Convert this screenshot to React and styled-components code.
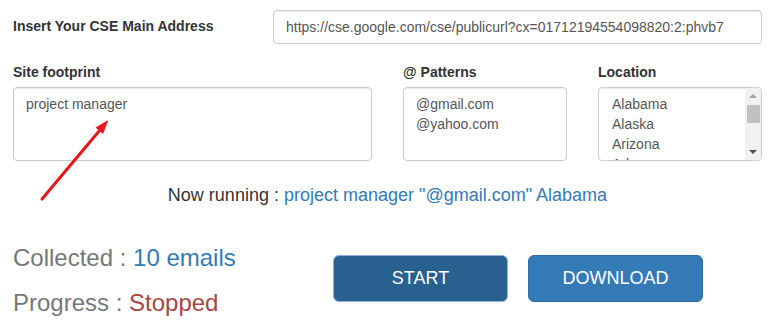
import React from "react";
import styled, { createGlobalStyle } from "styled-components";

const GlobalStyle = createGlobalStyle`
  * { box-sizing: border-box; }
  html, body { margin: 0; padding: 0; background: #fff; }
  body {
    font-family: "Liberation Sans", Arial, Helvetica, sans-serif;
    color: #333;
    font-size: 14px;
    line-height: 20px;
  }
`;

const Page = styled.div`
  position: relative;
  width: 770px;
  height: 324px;
  overflow: hidden;
  padding: 10px 8px 0 13px;
`;

const TopRow = styled.div`
  display: flex;
  align-items: center;
  height: 34px;
`;

const TopLabel = styled.label`
  flex: 0 0 260px;
  font-weight: bold;
  font-size: 14px;
  margin-top: -2px;
`;

const UrlInput = styled.input`
  flex: 1;
  height: 34px;
  border: 1px solid #ccc;
  border-radius: 4px;
  padding: 6px 4px 6px 12px;
  font-family: inherit;
  font-size: 14px;
  color: #555;
  box-shadow: inset 0 1px 1px rgba(0, 0, 0, 0.075);
  outline: none;
`;

const FieldsGrid = styled.div`
  margin-top: 18px;
  display: grid;
  grid-template-columns: 359px 164px 164px;
  column-gap: 31px;
`;

const Field = styled.div`
  display: flex;
  flex-direction: column;
`;

const FieldLabel = styled.label`
  font-weight: bold;
  font-size: 14px;
  line-height: 20px;
  margin-bottom: 5px;
`;

const TextArea = styled.textarea`
  height: 74px;
  border: 1px solid #ccc;
  border-radius: 4px;
  padding: 6px 12px;
  font-family: inherit;
  font-size: 14px;
  line-height: 20px;
  color: #555;
  resize: none;
  overflow: hidden;
  box-shadow: inset 0 1px 1px rgba(0, 0, 0, 0.075);
  outline: none;
`;

const ListBox = styled.div`
  height: 74px;
  border: 1px solid #ccc;
  border-radius: 4px;
  display: flex;
  overflow: hidden;
  box-shadow: inset 0 1px 1px rgba(0, 0, 0, 0.075);
`;

const OptionList = styled.ul`
  flex: 1;
  list-style: none;
  margin: 0;
  padding: 6px 0 0 13px;
  font-size: 14px;
  line-height: 20px;
  color: #555;
`;

const Scrollbar = styled.div`
  flex: 0 0 16px;
  background: #f1f1f1;
  display: flex;
  flex-direction: column;
  align-items: center;
`;

const ArrowButton = styled.div`
  height: 16px;
  width: 16px;
  display: flex;
  align-items: center;
  justify-content: center;
  &::after {
    content: "";
    width: 0;
    height: 0;
    border-left: 4px solid transparent;
    border-right: 4px solid transparent;
    ${(p) =>
      p.$dir === "up"
        ? `border-bottom: 4px solid ${p.$color};`
        : `border-top: 4px solid ${p.$color};`}
  }
`;

const Thumb = styled.div`
  width: 13px;
  height: 18px;
  margin-top: 1px;
  background: #c1c1c1;
`;

const Track = styled.div`
  flex: 1;
`;

const Running = styled.div`
  margin-top: 21px;
  text-align: center;
  font-size: 18px;
  line-height: 26px;
  color: #333;
`;

const Accent = styled.span`
  color: ${(p) => p.$color};
`;

const StatsRow = styled.div`
  margin-top: 36px;
  display: flex;
  align-items: flex-start;
`;

const StatsBlock = styled.div`
  flex: 0 0 320px;
`;

const StatLine = styled.div`
  font-size: 24px;
  line-height: 27px;
  color: #777;
  & + & {
    margin-top: 18px;
  }
`;

const Buttons = styled.div`
  display: flex;
  gap: 20px;
  margin-top: 11px;
`;

const Button = styled.button`
  width: 175px;
  height: 47px;
  font-family: inherit;
  font-size: 18px;
  color: #fff;
  background: ${(p) => p.$bg};
  border: 1px solid ${(p) => p.$border};
  border-radius: 6px;
  cursor: pointer;
`;

const ArrowOverlay = styled.svg`
  position: absolute;
  left: 0;
  top: 0;
  pointer-events: none;
`;

export default function App() {
  return (
    <>
      <GlobalStyle />
      <Page>
        <TopRow>
          <TopLabel>Insert Your CSE Main Address</TopLabel>
          <UrlInput
            readOnly
            value="https://cse.google.com/cse/publicurl?cx=01712194554098820:2:phvb7"
          />
        </TopRow>

        <FieldsGrid>
          <Field>
            <FieldLabel>Site footprint</FieldLabel>
            <TextArea readOnly value="project manager" />
          </Field>
          <Field>
            <FieldLabel>@ Patterns</FieldLabel>
            <TextArea readOnly value={"@gmail.com\n@yahoo.com"} />
          </Field>
          <Field>
            <FieldLabel>Location</FieldLabel>
            <ListBox>
              <OptionList>
                <li>Alabama</li>
                <li>Alaska</li>
                <li>Arizona</li>
                <li>Arkansas</li>
              </OptionList>
              <Scrollbar>
                <ArrowButton $dir="up" $color="#a3a3a3" />
                <Thumb />
                <Track />
                <ArrowButton $dir="down" $color="#505050" />
              </Scrollbar>
            </ListBox>
          </Field>
        </FieldsGrid>

        <Running>
          Now running :{" "}
          <Accent $color="#337ab7">project manager "@gmail.com" Alabama</Accent>
        </Running>

        <StatsRow>
          <StatsBlock>
            <StatLine>
              Collected : <Accent $color="#337ab7">10 emails</Accent>
            </StatLine>
            <StatLine>
              Progress : <Accent $color="#a94442">Stopped</Accent>
            </StatLine>
          </StatsBlock>
          <Buttons>
            <Button $bg="#286090" $border="#8cb1e2">START</Button>
            <Button $bg="#337ab7" $border="#2e6da4">DOWNLOAD</Button>
          </Buttons>
        </StatsRow>

        <ArrowOverlay width="770" height="324" viewBox="0 0 770 324">
          <line
            x1="42"
            y1="199"
            x2="100"
            y2="130"
            stroke="#e8161b"
            strokeWidth="3"
            strokeLinecap="round"
          />
          <polygon
            points="108.3,120 95.5,127.5 103.1,133.9"
            fill="#e8161b"
          />
        </ArrowOverlay>
      </Page>
    </>
  );
}
